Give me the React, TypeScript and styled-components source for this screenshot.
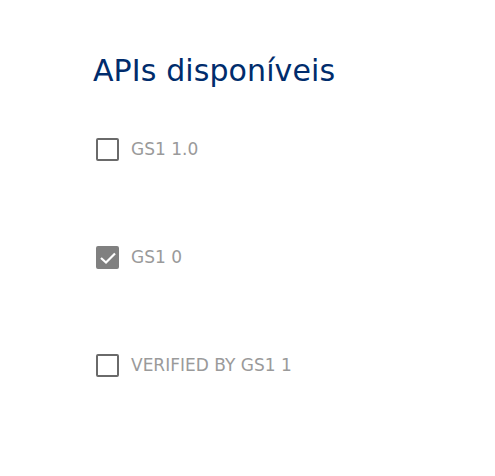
import React, { useState } from "react";
import styled, { createGlobalStyle } from "styled-components";

const Global = createGlobalStyle`
  html, body { margin: 0; padding: 0; background: #ffffff; }
  body { font-family: "DejaVu Sans", Verdana, sans-serif; }
`;

const Page = styled.div`
  padding: 53px 0 0 93px;
`;

const Title = styled.h2`
  margin: 0 0 49px 0;
  font-size: 30px;
  line-height: 36px;
  font-weight: normal;
  color: #002c6c;
  letter-spacing: 0.1px;
`;

const List = styled.div`
  display: flex;
  flex-direction: column;
  gap: 85px;
  padding-left: 3px;
`;

const Row = styled.label`
  display: flex;
  align-items: center;
  gap: 12px;
  cursor: pointer;
`;

const Box = styled.span<{ $checked: boolean }>`
  box-sizing: border-box;
  flex: 0 0 23px;
  width: 23px;
  height: 23px;
  border-radius: 2px;
  border: 2px solid ${(p) => (p.$checked ? "#808080" : "#6a6a6a")};
  background: ${(p) => (p.$checked ? "#808080" : "#ffffff")};
  display: flex;
  align-items: center;
  justify-content: center;
`;

const Label = styled.span`
  font-size: 17px;
  line-height: 23px;
  color: #9a9a9a;
`;

const items = ["GS1 1.0", "GS1 0", "VERIFIED BY GS1 1"];

export default function App() {
  const [checked, setChecked] = useState<boolean[]>([false, true, false]);
  return (
    <>
      <Global />
      <Page>
        <Title>APIs disponíveis</Title>
        <List>
          {items.map((t, i) => (
            <Row
              key={t}
              onClick={() =>
                setChecked((c) => c.map((v, j) => (j === i ? !v : v)))
              }
            >
              <Box $checked={checked[i]}>
                {checked[i] && (
                  <svg width="19" height="19" viewBox="0 0 19 19">
                    <path
                      d="M3 10 L8 14.5 L17 5.5"
                      fill="none"
                      stroke="#ffffff"
                      strokeWidth="2.2"
                    />
                  </svg>
                )}
              </Box>
              <Label>{t}</Label>
            </Row>
          ))}
        </List>
      </Page>
    </>
  );
}
